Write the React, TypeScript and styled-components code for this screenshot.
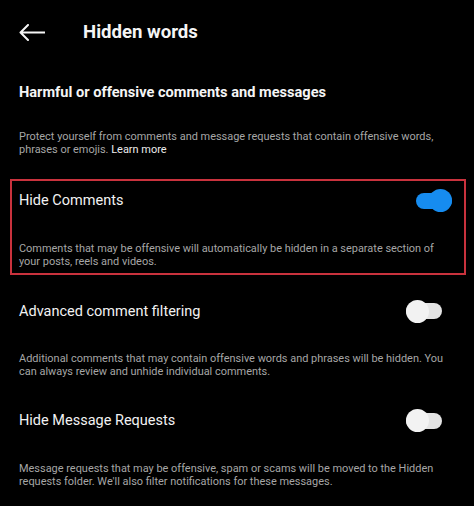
import React from "react";
import styled, { createGlobalStyle } from "styled-components";

const Global = createGlobalStyle`
  html, body { margin: 0; padding: 0; background: #000; }
  body { font-family: Roboto, "Noto Sans", "Liberation Sans", sans-serif; color: #f2f2f2; -webkit-font-smoothing: antialiased; }
`;

const Screen = styled.div`
  width: 474px;
  height: 506px;
  background: #000;
  overflow: hidden;
  display: flex;
  flex-direction: column;
  & > * {
    flex-shrink: 0;
  }
`;

const Header = styled.header`
  height: 64px;
  display: flex;
  align-items: center;
  padding-left: 19px;
  gap: 38px;
`;

const BackButton = styled.button`
  background: none;
  border: 0;
  padding: 0;
  display: flex;
  color: #f5f5f5;
`;

const Title = styled.h1`
  margin: 0;
  font-size: 18.6px;
  font-weight: 700;
  line-height: 22px;
  color: #f5f5f5;
`;

const SectionHeading = styled.h2`
  margin: 18px 0 0 19px;
  font-size: 14.6px;
  font-weight: 700;
  line-height: 20px;
  color: #f5f5f5;
`;

const Description = styled.p`
  margin: 0;
  font-size: 10.95px;
  line-height: 13.3px;
  color: #a6a6a6;
  white-space: nowrap;
`;

const IntroText = styled(Description)`
  margin: 28px 0 0 19px;
`;

const LearnMore = styled.a`
  color: #ececec;
  text-decoration: none;
`;

const Setting = styled.section<{ $highlight?: boolean; $top: number }>`
  margin-top: ${(p) => p.$top}px;
  ${(p) =>
    p.$highlight
      ? `margin-left: 10px; margin-right: 8px; border: 2px solid #c9323d; padding: 8px 12px 5px 7px;`
      : `padding: 0 32px 0 19px;`}
  display: flex;
  flex-direction: column;
  gap: 29px;
`;

const Row = styled.div`
  display: flex;
  align-items: center;
  justify-content: space-between;
  height: 24px;
`;

const Label = styled.span`
  font-size: 14.5px;
  line-height: 20px;
  color: #f2f2f2;
  padding-top: 1px;
`;

const Toggle = styled.div<{ $on: boolean }>`
  position: relative;
  width: 36px;
  height: 24px;
  flex: none;
  &::before {
    content: "";
    position: absolute;
    left: 0;
    right: 0;
    top: 4px;
    height: 16px;
    border-radius: 8px;
    background: ${(p) => (p.$on ? "#168cf0" : "#e4e4e4")};
  }
`;

const Thumb = styled.span<{ $on: boolean }>`
  position: absolute;
  top: 0.5px;
  width: 23px;
  height: 23px;
  border-radius: 50%;
  ${(p) => (p.$on ? "right: 0;" : "left: 0;")}
  background: ${(p) => (p.$on ? "#168cf0" : "#f2f2f2")};
`;

const Switch = ({ on }: { on: boolean }) => (
  <Toggle $on={on} role="switch" aria-checked={on}>
    <Thumb $on={on} />
  </Toggle>
);

const BackArrow = () => (
  <svg width="26" height="17" viewBox="0 0 26 17" fill="none">
    <path
      d="M1.5 8.5H25.5M9 1L1.5 8.5L9 16"
      stroke="currentColor"
      strokeWidth="2"
      strokeLinecap="round"
      strokeLinejoin="round"
    />
  </svg>
);

export default function App() {
  return (
    <>
      <Global />
      <Screen>
        <Header>
          <BackButton aria-label="Back">
            <BackArrow />
          </BackButton>
          <Title>Hidden words</Title>
        </Header>
        <SectionHeading>Harmful or offensive comments and messages</SectionHeading>
        <IntroText>
          Protect yourself from comments and message requests that contain offensive words,
          <br />
          phrases or emojis. <LearnMore href="#">Learn more</LearnMore>
        </IntroText>

        <Setting $highlight $top={22}>
          <Row>
            <Label>Hide Comments</Label>
            <Switch on />
          </Row>
          <Description>
            Comments that may be offensive will automatically be hidden in a separate section of
            <br />
            your posts, reels and videos.
          </Description>
        </Setting>

        <Setting $top={24}>
          <Row>
            <Label>Advanced comment filtering</Label>
            <Switch on={false} />
          </Row>
          <Description>
            Additional comments that may contain offensive words and phrases will be hidden. You
            <br />
            can always review and unhide individual comments.
          </Description>
        </Setting>

        <Setting $top={30}>
          <Row>
            <Label>Hide Message Requests</Label>
            <Switch on={false} />
          </Row>
          <Description>
            Message requests that may be offensive, spam or scams will be moved to the Hidden
            <br />
            requests folder. We'll also filter notifications for these messages.
          </Description>
        </Setting>
      </Screen>
    </>
  );
}
